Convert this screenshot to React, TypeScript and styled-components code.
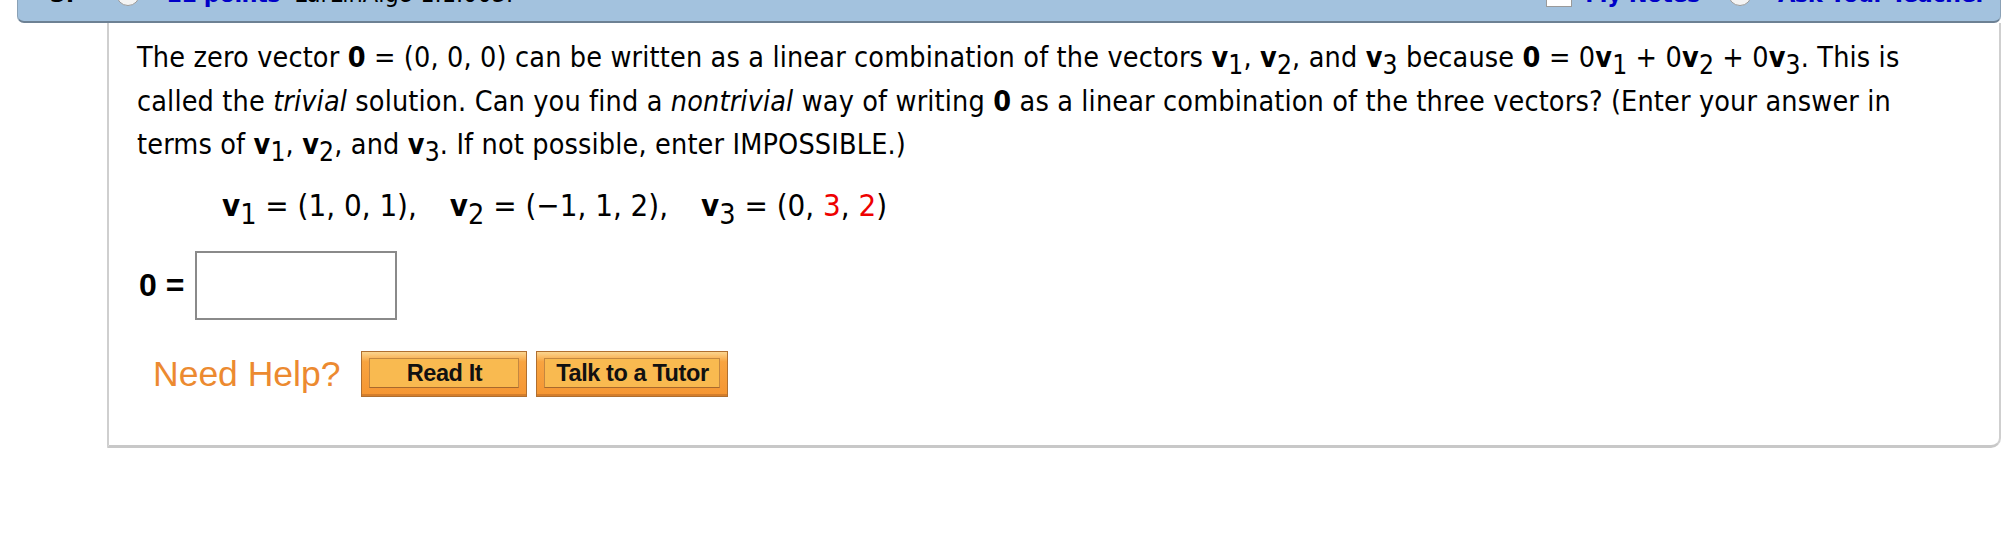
import React from "react";
import styled, { createGlobalStyle } from "styled-components";

const GlobalStyle = createGlobalStyle`
  html, body {
    margin: 0;
    padding: 0;
    background: #ffffff;
  }
  body {
    font-family: "DejaVu Sans Condensed", "DejaVu Sans", sans-serif;
    color: #000;
  }
`;

function Vec({ n }: { n: number }) {
  return (
    <>
      <BoldV>v</BoldV>
      <Sub>{n}</Sub>
    </>
  );
}

function App() {
  return (
    <Page>
      <GlobalStyle />
      <Header>
        <HeaderGroup>
          <QuestionNumber>3.</QuestionNumber>
          <StatusDot />
          <Points>11 points</Points>
          <Code>LarLinAlg8 1.1.003.</Code>
        </HeaderGroup>
        <HeaderGroup>
          <NoteBox />
          <HeaderLink>My Notes</HeaderLink>
          <StatusDot />
          <HeaderLink>Ask Your Teacher</HeaderLink>
        </HeaderGroup>
      </Header>

      <Card>
        <Question>
          The zero vector <Bold>0</Bold> = (0, 0, 0) can be written as a linear combination of
          the vectors <Vec n={1} />, <Vec n={2} />, and <Vec n={3} /> because <Bold>0</Bold> = 0
          <Vec n={1} /> + 0<Vec n={2} /> + 0<Vec n={3} />. This is
          <br />
          called the <em>trivial</em> solution. Can you find a <em>nontrivial</em> way of writing{" "}
          <Bold>0</Bold> as a linear combination of the three vectors? (Enter your answer in
          <br />
          terms of <Vec n={1} />, <Vec n={2} />, and <Vec n={3} />. If not possible, enter
          IMPOSSIBLE.)
        </Question>

        <VectorLine>
          <VectorItem>
            <Vec n={1} /> = (1, 0, 1),
          </VectorItem>
          <VectorItem>
            <Vec n={2} /> = (−1, 1, 2),
          </VectorItem>
          <VectorItem>
            <Vec n={3} /> = (0, <Red>3</Red>, <Red>2</Red>)
          </VectorItem>
        </VectorLine>

        <AnswerRow>
          <AnswerLabel>0 =</AnswerLabel>
          <AnswerInput type="text" />
        </AnswerRow>

        <HelpRow>
          <NeedHelp>Need Help?</NeedHelp>
          <HelpButton $width={166}>
            <HelpButtonFace>Read It</HelpButtonFace>
          </HelpButton>
          <HelpButton $width={192}>
            <HelpButtonFace>Talk to a Tutor</HelpButtonFace>
          </HelpButton>
        </HelpRow>
      </Card>
    </Page>
  );
}

const Page = styled.div`
  width: 2016px;
  height: 536px;
  box-sizing: border-box;
  padding: 0 15px 0 17px;
  overflow: hidden;
`;

const Header = styled.div`
  margin-top: -22px;
  height: 45px;
  box-sizing: border-box;
  background: #a3c2de;
  border: 1px solid #8aa1b6;
  border-bottom: 2px solid #6d8194;
  border-radius: 0 0 7px 7px;
  display: flex;
  justify-content: space-between;
  align-items: flex-start;
  padding: 0 14px 0 32px;
  font-size: 25px;
  line-height: 30px;
`;

const HeaderGroup = styled.div`
  display: flex;
  align-items: center;
`;

const QuestionNumber = styled.span`
  font-weight: bold;
  color: #000;
  margin-right: 42px;
`;

const StatusDot = styled.span`
  width: 22px;
  height: 22px;
  border-radius: 50%;
  background: #f4f4f4;
  border: 1px solid #9a9a9a;
  margin-right: 26px;
`;

const Points = styled.span`
  color: #0000c8;
  font-weight: bold;
  letter-spacing: -0.5px;
  margin-right: 14px;
`;

const Code = styled.span`
  color: #000;
`;

const NoteBox = styled.span`
  width: 24px;
  height: 24px;
  background: #fff;
  border: 1px solid #9a9a9a;
  margin-right: 13px;
`;

const HeaderLink = styled.span`
  color: #0000c8;
  font-weight: bold;
  letter-spacing: -0.5px;
  margin-right: 28px;
  &:last-child {
    margin-right: 0;
  }
`;

const Card = styled.div`
  margin-left: 90px;
  border-left: 2px solid #cfcfcf;
  border-right: 2px solid #cfcfcf;
  border-bottom: 3px solid #c8c8c8;
  border-bottom-right-radius: 10px;
  padding: 13px 28px 48px 28px;
`;

const Question = styled.p`
  margin: 0;
  font-size: 28.5px;
  letter-spacing: 0.15px;
  line-height: 43.5px;
  white-space: nowrap;
`;

const Bold = styled.b`
  font-weight: bold;
`;

const BoldV = styled.b`
  font-weight: bold;
`;

const Sub = styled.span`
  font-size: 0.92em;
  vertical-align: -0.28em;
  line-height: 0;
`;

const VectorLine = styled.p`
  margin: 17px 0 0 52px;
  font-size: 31px;
  line-height: 43.5px;
  white-space: nowrap;
`;

const VectorItem = styled.span`
  margin-left: 33px;
`;

const Red = styled.span`
  color: #ee0000;
`;

const AnswerRow = styled.div`
  display: flex;
  align-items: center;
  margin-top: 24px;
  margin-left: 2px;
`;

const AnswerLabel = styled.span`
  font-family: "Liberation Sans", Arial, sans-serif;
  font-weight: bold;
  font-size: 32px;
`;

const AnswerInput = styled.input`
  width: 202px;
  height: 69px;
  box-sizing: border-box;
  margin-left: 11px;
  border: 2px solid #8a8a8a;
  background: #fff;
  padding: 0;
`;

const HelpRow = styled.div`
  display: flex;
  align-items: center;
  gap: 9px;
  margin-top: 31px;
  margin-left: 16px;
`;

const NeedHelp = styled.span`
  font-family: "Liberation Sans", Arial, sans-serif;
  font-size: 35.5px;
  color: #ec8a30;
  margin-right: 12px;
`;

const HelpButton = styled.div<{ $width: number }>`
  width: ${(p) => p.$width}px;
  height: 46px;
  box-sizing: border-box;
  padding: 6px 7px 8px 7px;
  background: linear-gradient(#fcd58f 0%, #f8a440 22%, #f59633 100%);
  border: 1px solid #b06f30;
  box-shadow: inset 0 -2px 0 #d47e2c;
`;

const HelpButtonFace = styled.div`
  height: 100%;
  box-sizing: border-box;
  display: flex;
  align-items: center;
  justify-content: center;
  background: #f9ba50;
  border: 1px solid #c48740;
  border-bottom-color: #a9692c;
  font-family: "Liberation Sans", Arial, sans-serif;
  font-weight: bold;
  font-size: 23.5px;
  letter-spacing: -0.4px;
  color: #111;
`;

export default App;
